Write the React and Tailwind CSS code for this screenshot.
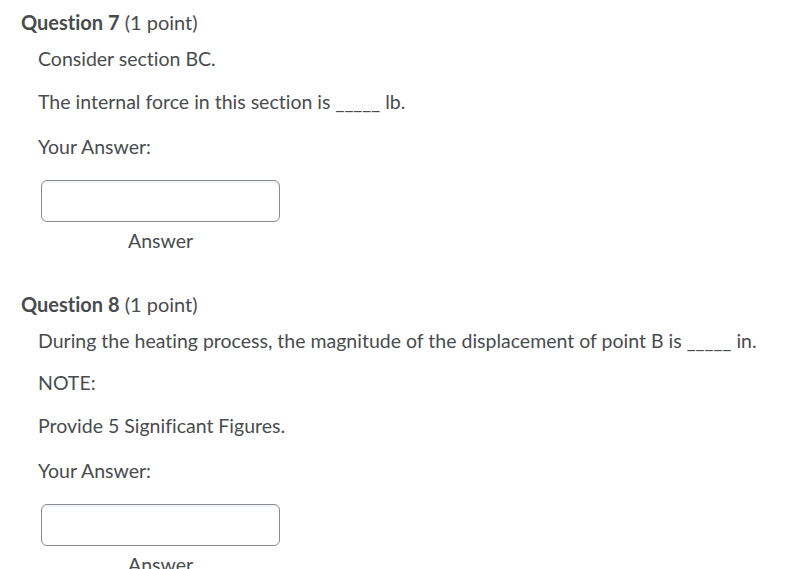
export default function App() {
  const blank = '_____';
  return (
    <div className="min-h-screen bg-white text-[#494c4e] text-[19.5px] leading-[28px] [font-variant-ligatures:none]" style={{ fontFamily: 'Lato, "Open Sans", sans-serif' }}>
      <div className="pl-[21px] pt-[8px]">
        <h2 className="text-[20px] leading-[28px]">
          <span className="font-bold">Question 7</span> (1 point)
        </h2>
        <div className="pl-[17px]">
          <p className="mt-[9px]">Consider section BC.</p>
          <p className="mt-[15px]">The internal force in this section is {blank} lb.</p>
          <p className="mt-[17px]">Your Answer:</p>
          <div className="mt-[19px] ml-[3px] w-[239px]">
            <div className="h-[42px] rounded-[6px] border border-[#868c8f] shadow-[inset_0_2px_0_0_rgba(185,194,208,0.2)]" />
            <div className="text-center mt-[5px]">Answer</div>
          </div>
        </div>
        <h2 className="mt-[35px] text-[20px] leading-[28px]">
          <span className="font-bold">Question 8</span> (1 point)
        </h2>
        <div className="pl-[17px]">
          <p className="mt-[9px]">During the heating process, the magnitude of the displacement of point B is {blank} in.</p>
          <p className="mt-[14px]">NOTE:</p>
          <p className="mt-[15px]">Provide 5 Significant Figures.</p>
          <p className="mt-[17px]">Your Answer:</p>
          <div className="mt-[19px] ml-[3px] w-[239px]">
            <div className="h-[42px] rounded-[6px] border border-[#868c8f] shadow-[inset_0_2px_0_0_rgba(185,194,208,0.2)]" />
            <div className="text-center mt-[5px]">Answer</div>
          </div>
        </div>
      </div>
    </div>
  );
}
